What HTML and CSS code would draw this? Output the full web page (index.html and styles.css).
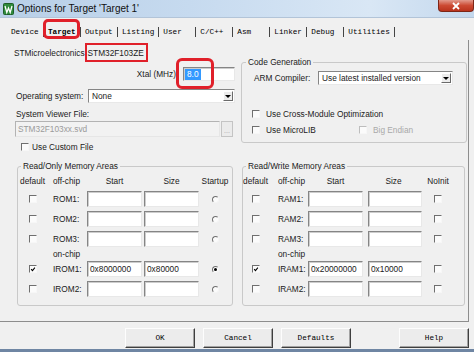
FILE: index.html
```
<!DOCTYPE html>
<html lang="en">
<head>
    <meta charset="UTF-8">
    <title>Options for Target 'Target 1'</title>
    <link rel="stylesheet" href="styles.css">
</head>
<body>
    <div class="titlebar">
        <svg class="app-icon" viewBox="0 0 11 12">
            <rect x="0.5" y="0.5" width="10" height="11" rx="1" fill="#2f8a3c" stroke="#1d5e27"/>
            <polyline points="2,3 3.8,9.5 5.5,5 7.2,9.5 9,3" fill="none" stroke="#fff" stroke-width="1.3"/>
        </svg>
        <span class="title">Options for Target 'Target 1'</span>
        <span class="close">
            <svg viewBox="0 0 10 8" width="10" height="8">
                <path d="M2 1L8 7M8 1L2 7" stroke="#fff" stroke-width="1.8"/>
            </svg>
        </span>
    </div>

    <div class="tabs">
        <span class="tab">Device</span>
        <span class="tab tab-active">Target</span>
        <span class="tab">Output</span>
        <span class="tab">Listing</span>
        <span class="tab">User</span>
        <span class="tab">C/C++</span>
        <span class="tab">Asm</span>
        <span class="tab">Linker</span>
        <span class="tab">Debug</span>
        <span class="tab">Utilities</span>
    </div>

    <div class="page">
        <div class="top">
            <div class="device-col">
                <div class="vendor">STMicroelectronics<span class="chip">STM32F103ZE</span></div>
                <div class="xtal-row">
                    <span>Xtal (MHz)</span>
                    <span class="xtal-field">
                        <span class="field xtal-input"><span class="sel">8.0</span></span>
                    </span>
                </div>
                <div class="os-row">
                    <span class="os-label">Operating system:</span>
                    <div class="select os-select">
                        <span class="select-text">None</span>
                        <span class="select-btn"><i class="arrow"></i></span>
                    </div>
                </div>
                <div class="svf-label">System Viewer File:</div>
                <div class="svf-row">
                    <span class="field svf-input">STM32F103xx.svd</span>
                    <span class="browse">...</span>
                </div>
                <div class="custom-row">
                    <span class="cb"></span>
                    <span>Use Custom File</span>
                </div>
            </div>

            <fieldset class="group codegen">
                <legend>Code Generation</legend>
                <div class="cg-body">
                    <div class="compiler-row">
                        <span class="compiler-label">ARM Compiler:</span>
                        <div class="select compiler-select">
                            <span class="select-text">Use latest installed version</span>
                            <span class="select-btn"><i class="arrow"></i></span>
                        </div>
                    </div>
                    <div class="cg-check first">
                        <span class="check-item"><span class="cb"></span>Use Cross-Module Optimization</span>
                    </div>
                    <div class="cg-check">
                        <span class="check-item wide"><span class="cb"></span>Use MicroLIB</span>
                        <span class="check-item disabled"><span class="cb"></span>Big Endian</span>
                    </div>
                </div>
            </fieldset>
        </div>

        <div class="mem">
            <fieldset class="group rom">
                <legend>Read/Only Memory Areas</legend>
                <div class="mem-grid">
                    <span class="hd">default</span><span class="lbl">off-chip</span><span class="hd">Start</span><span class="hd hd-size">Size</span><span class="hd">Startup</span>

                    <span class="cb"></span><span class="lbl">ROM1:</span><span class="field mem-field"></span><span class="field mem-field size-field"></span><span class="radio"></span>
                    <span class="cb"></span><span class="lbl">ROM2:</span><span class="field mem-field"></span><span class="field mem-field size-field"></span><span class="radio"></span>
                    <span class="cb"></span><span class="lbl">ROM3:</span><span class="field mem-field"></span><span class="field mem-field size-field"></span><span class="radio"></span>

                    <span class="lbl onchip">on-chip</span>

                    <span class="cb checked"><svg viewBox="0 0 8 8"><path d="M1.5 3.5L3.3 5.5L6.5 1.5" fill="none" stroke="#000" stroke-width="1.4"/></svg></span><span class="lbl">IROM1:</span><span class="field mem-field">0x8000000</span><span class="field mem-field size-field">0x80000</span><span class="radio on"></span>
                    <span class="cb"></span><span class="lbl">IROM2:</span><span class="field mem-field"></span><span class="field mem-field size-field"></span><span class="radio"></span>
                </div>
            </fieldset>

            <fieldset class="group ram">
                <legend>Read/Write Memory Areas</legend>
                <div class="mem-grid">
                    <span class="hd">default</span><span class="lbl">off-chip</span><span class="hd">Start</span><span class="hd hd-size">Size</span><span class="hd">NoInit</span>

                    <span class="cb"></span><span class="lbl">RAM1:</span><span class="field mem-field"></span><span class="field mem-field size-field"></span><span class="cb"></span>
                    <span class="cb"></span><span class="lbl">RAM2:</span><span class="field mem-field"></span><span class="field mem-field size-field"></span><span class="cb"></span>
                    <span class="cb"></span><span class="lbl">RAM3:</span><span class="field mem-field"></span><span class="field mem-field size-field"></span><span class="cb"></span>

                    <span class="lbl onchip">on-chip</span>

                    <span class="cb checked"><svg viewBox="0 0 8 8"><path d="M1.5 3.5L3.3 5.5L6.5 1.5" fill="none" stroke="#000" stroke-width="1.4"/></svg></span><span class="lbl">IRAM1:</span><span class="field mem-field">0x20000000</span><span class="field mem-field size-field">0x10000</span><span class="cb"></span>
                    <span class="cb"></span><span class="lbl">IRAM2:</span><span class="field mem-field"></span><span class="field mem-field size-field"></span><span class="cb"></span>
                </div>
            </fieldset>
        </div>
    </div>

    <div class="buttons">
        <span class="btn btn-default">OK</span>
        <span class="btn">Cancel</span>
        <span class="btn">Defaults</span>
        <span class="btn btn-help">Help</span>
    </div>
    <div class="frame-bottom"></div>
</body>
</html>
```

FILE: styles.css
```
:root {
    --face: #f0f0f0;
    --text: #1a1a1a;
    --muted: #9a9a9a;
    --sunken: #858585;
    --light: #e8e8e8;
    --group: #c9c9c9;
    --mark: #e0202a;
    --mono: "Liberation Mono", "Courier New", monospace;
}

body {
    margin: 0;
    width: 474px;
    height: 352px;
    overflow: hidden;
    background-color: var(--face);
    color: var(--text);
    font-family: "Liberation Sans", Arial, sans-serif;
    font-size: 8.3px;
}

/* window title */
.titlebar {
    height: 18px;
    display: flex;
    align-items: center;
    background: linear-gradient(to right, #b8cfe7 0%, #c6daef 40%, #d9e7f5 78%, #c4d8ed 100%);
    border-bottom: 1px solid #b2c4d8;
    box-sizing: border-box;
}

.app-icon {
    width: 11px;
    height: 12px;
    margin-left: 3px;
}

.title {
    margin-left: 3px;
    font-size: 10px;
    color: #111;
}

.close {
    margin-left: auto;
    align-self: flex-start;
    width: 36px;
    height: 12px;
    box-sizing: border-box;
    background: linear-gradient(#e29a8c, #cc4a33 50%, #b9331d);
    border: 1px solid #7d2516;
    border-top: none;
    border-radius: 0 0 4px 4px;
    display: flex;
    align-items: center;
    justify-content: center;
}

/* tab strip */
.tabs {
    display: flex;
    height: 13px;
    padding: 9px 0 0 7px;
    font-family: var(--mono);
    font-size: 7.7px;
    line-height: 10px;
    color: #000;
}

.tab {
    position: relative;
    padding: 0 4px;
    min-width: 28px;
    height: 10px;
    border-right: 1px solid #444;
}

.tab-active {
    font-weight: bold;
}

.tab-active::after {
    content: "";
    position: absolute;
    left: -1px;
    right: 0;
    top: -8px;
    bottom: -2px;
    border: 3px solid var(--mark);
    border-radius: 5px;
}

/* tab page */
.page {
    width: 468px;
    padding: 3px 0 15px 0;
    border-right: 1px solid #8d8d8d;
    border-bottom: 1px solid #8d8d8d;
}

.top {
    display: flex;
    align-items: flex-start;
    height: 109px;
}

.device-col {
    width: 222px;
    margin-left: 14px;
}

.vendor {
    height: 19px;
    display: flex;
    align-items: center;
}

.chip {
    height: 19px;
    box-sizing: border-box;
    display: flex;
    align-items: center;
    padding: 0 2px 0 1px;
    border: 2px solid var(--mark);
}

.field {
    box-sizing: border-box;
    display: flex;
    align-items: center;
    padding-left: 2px;
    background: #fff;
    border: 1px solid;
    border-color: var(--sunken) var(--light) var(--light) var(--sunken);
    box-shadow: inset 1px 1px 0 #cdcdcd;
    white-space: nowrap;
}

.xtal-row {
    display: flex;
    justify-content: flex-end;
    align-items: center;
    gap: 7px;
    height: 14px;
    margin-top: 5px;
    padding-right: 1px;
}

.xtal-field {
    position: relative;
    display: flex;
}

.xtal-input {
    width: 52px;
    height: 14px;
    padding-left: 1px;
}

.xtal-field::after {
    content: "";
    position: absolute;
    left: -7px;
    top: -9px;
    width: 32px;
    height: 25px;
    border: 3px solid var(--mark);
    border-radius: 6px;
}

.sel {
    background: #3399ff;
    color: #fff;
    padding: 1px 2px;
    line-height: 9px;
}

.os-row {
    display: flex;
    align-items: center;
    height: 14px;
    margin-top: 8px;
}

.os-label {
    width: 74px;
    padding-left: 2px;
    box-sizing: border-box;
}

.select {
    box-sizing: border-box;
    display: flex;
    align-items: center;
    height: 14px;
    background: #fff;
    border: 1px solid;
    border-color: var(--sunken) var(--light) var(--light) var(--sunken);
}

.os-select {
    width: 147px;
}

.select-text {
    flex: 1;
    padding-left: 3px;
}

.select-btn {
    width: 10px;
    height: 10px;
    margin-right: 1px;
    box-sizing: border-box;
    border: 1px solid;
    border-color: #fff #6a6a6a #6a6a6a #fff;
    background: #ececec;
    display: flex;
    align-items: center;
    justify-content: center;
}

.arrow {
    width: 0;
    height: 0;
    border-left: 3px solid transparent;
    border-right: 3px solid transparent;
    border-top: 3px solid #000;
}

.svf-label {
    height: 10px;
    line-height: 10px;
    margin-top: 6px;
    padding-left: 2px;
}

.svf-row {
    display: flex;
    height: 16px;
    margin-top: 2px;
}

.svf-input {
    width: 205px;
    height: 16px;
    margin-left: 1px;
    background: #f2f2f2;
    color: var(--muted);
    border-color: #b3b3b3 #e6e6e6 #e6e6e6 #b3b3b3;
    box-shadow: none;
}

.browse {
    width: 12px;
    height: 16px;
    margin-left: 1px;
    box-sizing: border-box;
    border: 1px solid #c4c4c4;
    background: #ebebeb;
    color: #a5a5a5;
    font-size: 7px;
    display: flex;
    align-items: flex-end;
    justify-content: center;
    line-height: 10px;
}

.custom-row {
    display: flex;
    align-items: center;
    gap: 3px;
    height: 10px;
    margin-top: 5px;
    padding-left: 7px;
}

/* check boxes and radios */
.cb {
    width: 8px;
    height: 8px;
    box-sizing: border-box;
    border: 1px solid;
    border-color: #6f6f6f #f7f7f7 #f7f7f7 #6f6f6f;
    background: #fbfbfb;
    display: inline-flex;
}

.cb svg {
    width: 7px;
    height: 7px;
}

.radio {
    width: 7px;
    height: 7px;
    box-sizing: border-box;
    border-radius: 50%;
    border: 1px solid;
    border-color: #707070 #f5f5f5 #f5f5f5 #707070;
    background: #fbfbfb;
    display: inline-flex;
    align-items: center;
    justify-content: center;
}

.radio.on::after {
    content: "";
    width: 3px;
    height: 3px;
    border-radius: 50%;
    background: #000;
}

/* group boxes */
.group {
    margin: 0;
    padding: 0;
    min-width: 0;
    box-sizing: border-box;
    border: 1px solid var(--group);
    border-radius: 3px;
}

.group legend {
    margin-left: 3px;
    padding: 0 2px;
    height: 10px;
    line-height: 10px;
}

.codegen {
    width: 226px;
    height: 86px;
    margin: 14px 0 0 5px;
}

.codegen legend {
    margin-left: 4px;
}

.cg-body {
    padding: 4px 0 0 10px;
}

.compiler-row {
    display: flex;
    align-items: center;
    height: 14px;
}

.compiler-label {
    width: 64px;
    margin-left: 2px;
}

.compiler-select {
    width: 135px;
}

.cg-check {
    display: flex;
    align-items: center;
    height: 10px;
    margin-top: 6px;
}

.cg-check.first {
    margin-top: 24px;
}

.check-item {
    display: flex;
    align-items: center;
    gap: 6px;
}

.check-item.wide {
    width: 107px;
}

.check-item.disabled {
    color: #a9a9a9;
}

.check-item.disabled .cb {
    border-color: #bdbdbd #f7f7f7 #f7f7f7 #bdbdbd;
}

/* memory areas */
.mem {
    display: flex;
    margin-top: 9px;
}

.rom {
    width: 216px;
    height: 145px;
    margin-left: 17px;
}

.ram {
    width: 223px;
    height: 145px;
    margin-left: 9px;
}

.mem-grid {
    display: grid;
    grid-template-rows: 16px 20px 20px 20px 10px 20px 20px;
    align-items: center;
    justify-items: center;
    padding-top: 2px;
}

.rom .mem-grid {
    grid-template-columns: 29px 40px 55px 57px 32px;
}

.ram .mem-grid {
    grid-template-columns: 25px 40px 55px 59px 32px;
}

.lbl {
    justify-self: start;
    padding-left: 6px;
}

.ram .lbl {
    padding-left: 10px;
}

.onchip {
    grid-column: 2 / -1;
}

.mem-field {
    width: 55px;
    height: 16px;
}

.size-field {
    justify-self: end;
}

.ram .size-field {
    width: 54px;
}

.hd-size {
    padding-left: 2px;
}

/* dialog buttons */
.buttons {
    display: flex;
    gap: 8px;
    margin-top: 6px;
    padding-left: 125px;
}

.btn {
    width: 70px;
    height: 20px;
    box-sizing: border-box;
    display: flex;
    align-items: center;
    justify-content: center;
    background: #ececec;
    border: 1px solid;
    border-color: #fdfdfd #3f3f3f #3f3f3f #fdfdfd;
    box-shadow: inset -1px -1px 0 #a3a3a3;
    font-family: var(--mono);
    font-size: 7.7px;
    color: #000;
}

.btn-help {
    margin-left: 40px;
}

.frame-bottom {
    height: 3px;
    margin-top: 1px;
    background: #6f86a3;
}
```
